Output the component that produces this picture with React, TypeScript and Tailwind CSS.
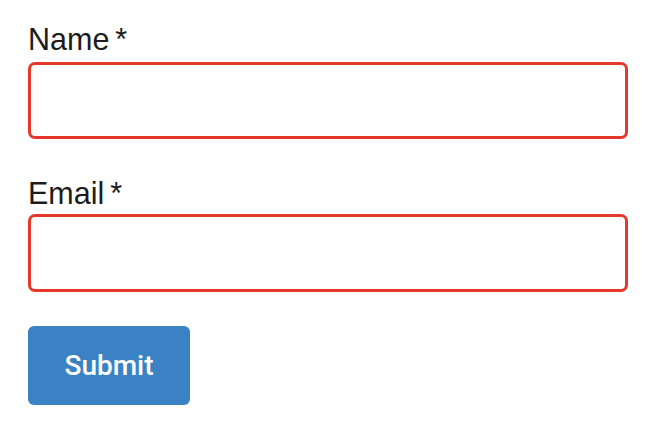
export default function App() {
  return (
    <div className="min-h-screen bg-white pl-[28px] pt-[21px] font-['Liberation_Sans',Arial,sans-serif] text-[#1c1c1c]">
      <div className="w-[600px] flex flex-col">
        <label className="block text-[30.5px] leading-[36px] h-[36px]">
          Name<span className="ml-[6px]">*</span>
        </label>
        <input
          type="text"
          className="mt-[5px] h-[77px] w-full rounded-[7px] border-[3px] border-[#e5372a] bg-white outline-none"
        />
        <label className="mt-[36px] block text-[30.5px] leading-[36px] h-[36px]">
          Email<span className="ml-[6px]">*</span>
        </label>
        <input
          type="email"
          className="mt-[3px] h-[78px] w-full rounded-[7px] border-[3px] border-[#e5372a] bg-white outline-none"
        />
        <button className="mt-[34px] h-[79px] w-[162px] rounded-[6px] bg-[#3b82c4] font-['Roboto',sans-serif] text-[28px] font-medium text-white">
          Submit
        </button>
      </div>
    </div>
  );
}
